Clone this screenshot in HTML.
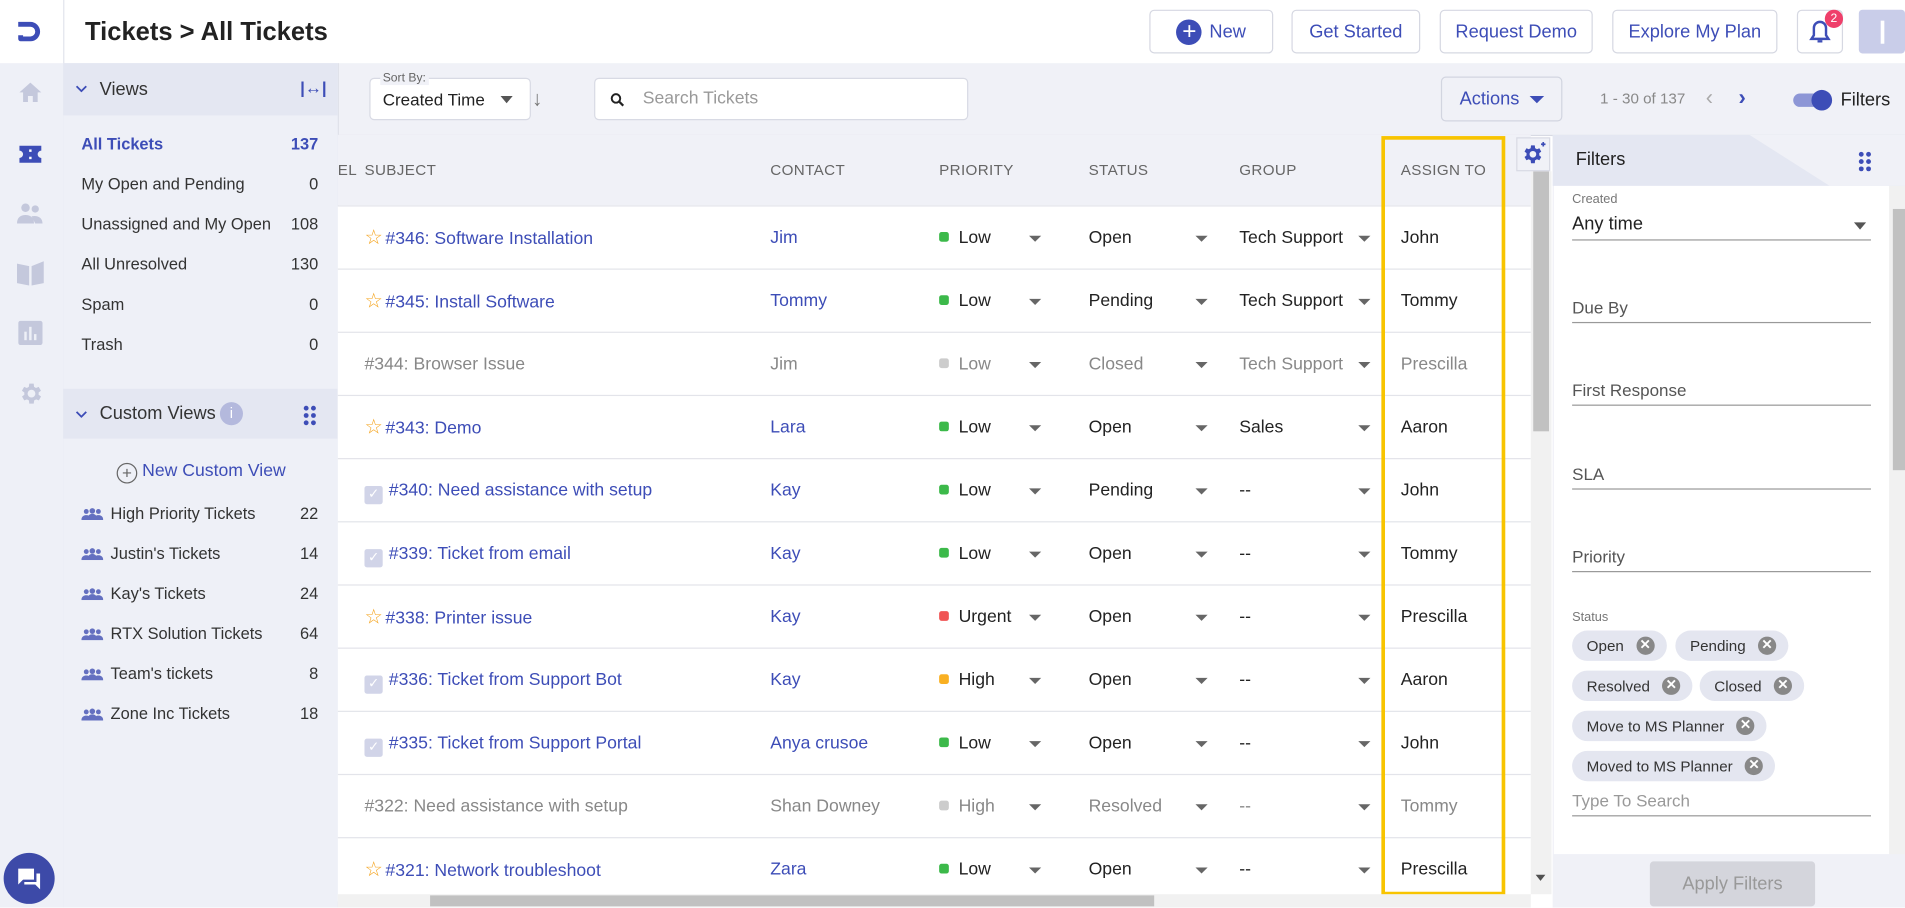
<!DOCTYPE html>
<html><head><meta charset="utf-8">
<style>
html,body{margin:0;padding:0;width:1905px;height:908px;overflow:hidden;background:#fff}
#w{position:absolute;left:0;top:0;width:1568px;height:747px;transform:scale(1.21492);transform-origin:0 0;font-family:"Liberation Sans",sans-serif;font-size:14px;color:#222;overflow:hidden}
.a{position:absolute}
.btn{position:absolute;top:8px;height:36px;border:1px solid #d6d8e2;border-radius:4px;background:#fff;color:#3d4db7;font-size:15px;display:flex;align-items:center;justify-content:center;box-sizing:border-box}
.vi{position:absolute;left:67px;width:195px;display:flex;justify-content:space-between;font-size:13.5px;color:#333}
.cv{position:absolute;left:67px;width:195px;display:flex;justify-content:space-between;font-size:13.5px;color:#333;align-items:center}
.cv span:first-child{display:flex;align-items:center;gap:6px}
.row{position:absolute;left:278px;width:982px;height:52px;border-top:1px solid #e3e4ea;background:#fff}
.row div{position:absolute;top:18px;font-size:14.5px;white-space:nowrap}
.lk{color:#3d4db7}
.gr{color:#888}
.dd{width:0;height:0;border-left:5px solid transparent;border-right:5px solid transparent;border-top:5px solid #666;top:24px!important}
.dot{display:inline-block;width:8px;height:8px;border-radius:2px;margin-right:8px;vertical-align:1px}
.hd{position:absolute;top:133px;font-size:12.5px;color:#666;letter-spacing:.3px}
.fl{position:absolute;left:1294px;width:246px;border-bottom:1px solid #999;font-size:14px;color:#555;padding-bottom:4px}
.chip{position:absolute;height:25px;border-radius:13px;background:#e4e6f0;font-size:12.5px;color:#333;display:flex;align-items:center;padding:0 10px 0 12px;gap:10px;box-sizing:border-box}
.x{width:15px;height:15px;border-radius:50%;background:#888;color:#fff;font-size:11px;line-height:15px;text-align:center;font-weight:bold}
.star{color:#f5a623;font-size:17px;margin-right:2px}
.cb{display:inline-block;width:15px;height:15px;background:#d1d4e8;border-radius:2px;vertical-align:-2px;margin-right:5px;color:#fff;font-size:11px;line-height:15px;text-align:center}
</style></head><body><div id="w">
<div class="a" style="left:0;top:0;width:52px;height:747px;background:#eef0f7;border-right:1px solid #dfe1ea"></div>
<div class="a" style="left:0;top:0;width:52px;height:52px;background:#fff"></div>
<svg class="a" style="left:13px;top:14px" width="24" height="24" viewBox="0 0 24 24"><path d="M2 4h10a8 8 0 0 1 0 16H4a2 2 0 0 1-2-2v-3h4v1h6a4 4 0 0 0 0-8H2z" fill="#3d4db7"/></svg>
<svg class="a" style="left:15px;top:66px" width="20" height="20" viewBox="0 0 20 20"><path d="M10 2 1 10h3v8h4v-5h4v5h4v-8h3z" fill="#c4c8dc"/></svg>
<svg class="a" style="left:15px;top:118px" width="20" height="18" viewBox="0 0 20 18"><path d="M1 2h18v4a3 3 0 0 0 0 6v4H1v-4a3 3 0 0 0 0-6z" fill="#3d4db7"/><rect x="9" y="5" width="2" height="2" fill="#fff"/><rect x="9" y="11" width="2" height="2" fill="#fff"/></svg>
<svg class="a" style="left:14px;top:166px" width="22" height="20" viewBox="0 0 22 20"><circle cx="7" cy="5" r="3.5" fill="#c4c8dc"/><circle cx="15" cy="6" r="3" fill="#c4c8dc"/><path d="M0 18c0-5 3-7 7-7s7 2 7 7z M12 12c5-1 9 1 9 6h-6z" fill="#c4c8dc"/></svg>
<svg class="a" style="left:13px;top:214px" width="24" height="22" viewBox="0 0 24 22"><path d="M1 3l10 2v16L1 19zM13 5l10-4v18l-10 2z" fill="#c4c8dc"/></svg>
<svg class="a" style="left:15px;top:264px" width="20" height="20" viewBox="0 0 20 20"><rect width="20" height="20" rx="2" fill="#c4c8dc"/><rect x="5" y="9" width="2" height="7" fill="#eef0f7"/><rect x="9" y="5" width="2" height="11" fill="#eef0f7"/><rect x="13" y="11" width="2" height="5" fill="#eef0f7"/></svg>
<svg class="a" style="left:14px;top:313px" width="22" height="22" viewBox="0 0 24 24"><path d="M19.4 13a7.5 7.5 0 0 0 0-2l2.1-1.6-2-3.5-2.5 1a7 7 0 0 0-1.7-1L15 3h-4l-.4 2.9a7 7 0 0 0-1.7 1l-2.5-1-2 3.5L6.6 11a7.5 7.5 0 0 0 0 2l-2.1 1.6 2 3.5 2.5-1a7 7 0 0 0 1.7 1L11 21h4l.4-2.9a7 7 0 0 0 1.7-1l2.5 1 2-3.5zM13 15.5a3.5 3.5 0 1 1 0-7 3.5 3.5 0 0 1 0 7z" fill="#c4c8dc"/></svg>
<div class="a" style="left:3px;top:702px;width:42px;height:42px;border-radius:50%;background:#3d4aa8"></div>
<svg class="a" style="left:13px;top:712px" width="22" height="22" viewBox="0 0 22 22"><path d="M2 3h13v9H6l-4 4z" fill="#fff"/><path d="M17 7h3v13l-4-4H7v-2h10z" fill="#fff"/></svg>

<div class="a" style="left:53px;top:0;width:1515px;height:52px;background:#fff"></div>
<div class="a" style="left:70px;top:15px;font-size:21px;font-weight:bold;color:#222">Tickets &gt; All Tickets</div>
<div class="btn" style="left:946px;width:102px"><span style="display:inline-block;width:21px;height:21px;border-radius:50%;background:#3d4db7;color:#fff;text-align:center;line-height:21px;font-size:20px;margin-right:6px">+</span>New</div>
<div class="btn" style="left:1063px;width:106px">Get Started</div>
<div class="btn" style="left:1185px;width:126px">Request Demo</div>
<div class="btn" style="left:1327px;width:136px">Explore My Plan</div>
<div class="btn" style="left:1479px;width:38px"><svg width="18" height="20" viewBox="0 0 18 20"><path d="M9 2a5 5 0 0 1 5 5v6l2 3H2l2-3V7a5 5 0 0 1 5-5z" fill="none" stroke="#3d4db7" stroke-width="2"/><path d="M7 18h4" stroke="#3d4db7" stroke-width="2"/></svg></div>
<div class="a" style="left:1502px;top:8px;width:15px;height:15px;border-radius:50%;background:#ef3f6a;color:#fff;font-size:10px;text-align:center;line-height:15px">2</div>
<div class="a" style="left:1530px;top:8px;width:38px;height:36px;background:#c9cde9;border-radius:3px"><div style="position:absolute;left:18px;top:9px;width:3px;height:19px;background:#fff"></div></div>

<div class="a" style="left:52px;top:52px;width:226px;height:695px;background:#eef0f7;border-right:1px solid #dfe1ea"></div>
<div class="a" style="left:52px;top:52px;width:226px;height:43px;background:#e4e7f2"></div>
<svg class="a" style="left:62px;top:70px" width="10" height="6"><path d="M1 1l4 4 4-4" fill="none" stroke="#3d4db7" stroke-width="1.5"/></svg>
<div class="a" style="left:82px;top:65px;font-size:15px;color:#333">Views</div>
<div class="a" style="left:247px;top:64px;color:#3d4db7;font-size:14px;font-weight:bold">|&#8596;|</div>
<div class="vi" style="top:111px;color:#3d4db7;font-weight:bold"><span>All Tickets</span><span>137</span></div>
<div class="vi" style="top:144px"><span>My Open and Pending</span><span>0</span></div>
<div class="vi" style="top:177px"><span>Unassigned and My Open</span><span>108</span></div>
<div class="vi" style="top:210px"><span>All Unresolved</span><span>130</span></div>
<div class="vi" style="top:243px"><span>Spam</span><span>0</span></div>
<div class="vi" style="top:276px"><span>Trash</span><span>0</span></div>
<div class="a" style="left:52px;top:320px;width:226px;height:41px;background:#e4e7f2"></div>
<svg class="a" style="left:62px;top:338px" width="10" height="6"><path d="M1 1l4 4 4-4" fill="none" stroke="#3d4db7" stroke-width="1.5"/></svg>
<div class="a" style="left:82px;top:332px;font-size:15px;color:#333">Custom Views</div>
<div class="a" style="left:181px;top:331px;width:19px;height:19px;border-radius:50%;background:#b4b9dd;color:#fff;text-align:center;font-size:12px;line-height:19px">i</div>
<svg class="a" style="left:249px;top:333px" width="12" height="18"><g fill="#3d4db7"><circle cx="3" cy="3" r="2"/><circle cx="9" cy="3" r="2"/><circle cx="3" cy="9" r="2"/><circle cx="9" cy="9" r="2"/><circle cx="3" cy="15" r="2"/><circle cx="9" cy="15" r="2"/></g></svg>
<div class="a" style="left:96px;top:380px;color:#3d4db7;font-size:14.5px"><span style="display:inline-block;width:15px;height:15px;border:1.5px solid #666;border-radius:50%;text-align:center;line-height:15px;color:#666;font-size:14px;margin-right:4px;vertical-align:-2px">+</span>New Custom View</div>
<div class="cv" style="top:415px"><span><svg width="18" height="10"><g fill="#6470c0"><circle cx="4" cy="3" r="2"/><circle cx="9" cy="2.5" r="2.3"/><circle cx="14" cy="3" r="2"/><path d="M0 10c0-3 2-4 4-4s4 1 4 4zM5 10c0-4 2-5 4-5s4 1 4 5zM10 10c0-3 2-4 4-4s4 1 4 4z"/></g></svg>High Priority Tickets</span><span>22</span></div>
<div class="cv" style="top:448px"><span><svg width="18" height="10"><g fill="#6470c0"><circle cx="4" cy="3" r="2"/><circle cx="9" cy="2.5" r="2.3"/><circle cx="14" cy="3" r="2"/><path d="M0 10c0-3 2-4 4-4s4 1 4 4zM5 10c0-4 2-5 4-5s4 1 4 5zM10 10c0-3 2-4 4-4s4 1 4 4z"/></g></svg>Justin's Tickets</span><span>14</span></div>
<div class="cv" style="top:481px"><span><svg width="18" height="10"><g fill="#6470c0"><circle cx="4" cy="3" r="2"/><circle cx="9" cy="2.5" r="2.3"/><circle cx="14" cy="3" r="2"/><path d="M0 10c0-3 2-4 4-4s4 1 4 4zM5 10c0-4 2-5 4-5s4 1 4 5zM10 10c0-3 2-4 4-4s4 1 4 4z"/></g></svg>Kay's Tickets</span><span>24</span></div>
<div class="cv" style="top:514px"><span><svg width="18" height="10"><g fill="#6470c0"><circle cx="4" cy="3" r="2"/><circle cx="9" cy="2.5" r="2.3"/><circle cx="14" cy="3" r="2"/><path d="M0 10c0-3 2-4 4-4s4 1 4 4zM5 10c0-4 2-5 4-5s4 1 4 5zM10 10c0-3 2-4 4-4s4 1 4 4z"/></g></svg>RTX Solution Tickets</span><span>64</span></div>
<div class="cv" style="top:547px"><span><svg width="18" height="10"><g fill="#6470c0"><circle cx="4" cy="3" r="2"/><circle cx="9" cy="2.5" r="2.3"/><circle cx="14" cy="3" r="2"/><path d="M0 10c0-3 2-4 4-4s4 1 4 4zM5 10c0-4 2-5 4-5s4 1 4 5zM10 10c0-3 2-4 4-4s4 1 4 4z"/></g></svg>Team's tickets</span><span>8</span></div>
<div class="cv" style="top:580px"><span><svg width="18" height="10"><g fill="#6470c0"><circle cx="4" cy="3" r="2"/><circle cx="9" cy="2.5" r="2.3"/><circle cx="14" cy="3" r="2"/><path d="M0 10c0-3 2-4 4-4s4 1 4 4zM5 10c0-4 2-5 4-5s4 1 4 5zM10 10c0-3 2-4 4-4s4 1 4 4z"/></g></svg>Zone Inc Tickets</span><span>18</span></div>

<div class="a" style="left:279px;top:52px;width:1289px;height:59px;background:#f0f1f7;border-bottom:1px solid #d8dae4"></div>
<div class="a" style="left:304px;top:64px;width:133px;height:35px;background:#fff;border:1px solid #d8dae4;border-radius:4px;box-sizing:border-box"></div>
<div class="a" style="left:313px;top:59px;font-size:10px;color:#666;background:#f0f1f7;padding:0 2px">Sort By:</div>
<div class="a" style="left:315px;top:74px;font-size:14px;color:#222">Created Time</div>
<div class="a" style="left:412px;top:79px;width:0;height:0;border-left:5px solid transparent;border-right:5px solid transparent;border-top:6px solid #555"></div>
<div class="a" style="left:438px;top:72px;font-size:17px;color:#777">&#8595;</div>
<div class="a" style="left:489px;top:64px;width:308px;height:35px;background:#fff;border:1px solid #d8dae4;border-radius:4px;box-sizing:border-box"></div>
<svg class="a" style="left:502px;top:76px" width="12" height="12"><circle cx="5" cy="5" r="3.5" fill="none" stroke="#222" stroke-width="1.6"/><path d="M7.5 7.5 11 11" stroke="#222" stroke-width="1.8"/></svg>
<div class="a" style="left:529px;top:73px;font-size:14.5px;color:#999">Search Tickets</div>
<div class="a" style="left:1186px;top:63px;width:100px;height:37px;border:1px solid #d2d5e0;border-radius:4px;box-sizing:border-box;color:#3d4db7;font-size:15px;display:flex;align-items:center;justify-content:center">Actions<span style="display:inline-block;margin-left:8px;border-left:6px solid transparent;border-right:6px solid transparent;border-top:6px solid #3d4db7"></span></div>
<div class="a" style="left:1317px;top:74px;font-size:12.5px;color:#888">1 - 30 of 137</div>
<div class="a" style="left:1404px;top:70px;font-size:18px;color:#aaa">&#8249;</div>
<div class="a" style="left:1431px;top:70px;font-size:18px;color:#3d4db7;font-weight:bold">&#8250;</div>
<div class="a" style="left:1476px;top:77px;width:28px;height:11px;border-radius:6px;background:#8d96d6"></div>
<div class="a" style="left:1491px;top:74px;width:17px;height:17px;border-radius:50%;background:#3d4db7"></div>
<div class="a" style="left:1515px;top:74px;font-size:15px;color:#222">Filters</div>

<div class="a" style="left:278px;top:111px;width:982px;height:58px;background:#f0f1f7"></div>
<div class="hd" style="left:278px">EL</div>
<div class="hd" style="left:300px">SUBJECT</div>
<div class="hd" style="left:634px">CONTACT</div>
<div class="hd" style="left:773px">PRIORITY</div>
<div class="hd" style="left:896px">STATUS</div>
<div class="hd" style="left:1020px">GROUP</div>
<div class="hd" style="left:1153px">ASSIGN TO</div>

<div class="row" style="top:169px"><div class="lk" style="left:22px;top:16px"><span class="star">☆</span>#346: Software Installation</div><div class="lk" style="left:356px">Jim</div><div style="left:495px"><span class="dot" style="background:#3cb94a"></span>Low</div><div class="dd" style="left:569px"></div><div style="left:618px">Open</div><div class="dd" style="left:706px"></div><div style="left:742px">Tech Support</div><div class="dd" style="left:840px"></div><div style="left:875px">John</div></div>
<div class="row" style="top:221px"><div class="lk" style="left:22px;top:16px"><span class="star">☆</span>#345: Install Software</div><div class="lk" style="left:356px">Tommy</div><div style="left:495px"><span class="dot" style="background:#3cb94a"></span>Low</div><div class="dd" style="left:569px"></div><div style="left:618px">Pending</div><div class="dd" style="left:706px"></div><div style="left:742px">Tech Support</div><div class="dd" style="left:840px"></div><div style="left:875px">Tommy</div></div>
<div class="row" style="top:273px"><div class="gr" style="left:22px">#344: Browser Issue</div><div class="gr" style="left:356px">Jim</div><div class="gr" style="left:495px"><span class="dot" style="background:#ccc"></span>Low</div><div class="dd" style="left:569px"></div><div class="gr" style="left:618px">Closed</div><div class="dd" style="left:706px"></div><div class="gr" style="left:742px">Tech Support</div><div class="dd" style="left:840px"></div><div class="gr" style="left:875px">Prescilla</div></div>
<div class="row" style="top:325px"><div class="lk" style="left:22px;top:16px"><span class="star">☆</span>#343: Demo</div><div class="lk" style="left:356px">Lara</div><div style="left:495px"><span class="dot" style="background:#3cb94a"></span>Low</div><div class="dd" style="left:569px"></div><div style="left:618px">Open</div><div class="dd" style="left:706px"></div><div style="left:742px">Sales</div><div class="dd" style="left:840px"></div><div style="left:875px">Aaron</div></div>
<div class="row" style="top:377px"><div class="lk" style="left:22px"><span class="cb">✓</span>#340: Need assistance with setup</div><div class="lk" style="left:356px">Kay</div><div style="left:495px"><span class="dot" style="background:#3cb94a"></span>Low</div><div class="dd" style="left:569px"></div><div style="left:618px">Pending</div><div class="dd" style="left:706px"></div><div style="left:742px">--</div><div class="dd" style="left:840px"></div><div style="left:875px">John</div></div>
<div class="row" style="top:429px"><div class="lk" style="left:22px"><span class="cb">✓</span>#339: Ticket from email</div><div class="lk" style="left:356px">Kay</div><div style="left:495px"><span class="dot" style="background:#3cb94a"></span>Low</div><div class="dd" style="left:569px"></div><div style="left:618px">Open</div><div class="dd" style="left:706px"></div><div style="left:742px">--</div><div class="dd" style="left:840px"></div><div style="left:875px">Tommy</div></div>
<div class="row" style="top:481px"><div class="lk" style="left:22px;top:16px"><span class="star">☆</span>#338: Printer issue</div><div class="lk" style="left:356px">Kay</div><div style="left:495px"><span class="dot" style="background:#f05454"></span>Urgent</div><div class="dd" style="left:569px"></div><div style="left:618px">Open</div><div class="dd" style="left:706px"></div><div style="left:742px">--</div><div class="dd" style="left:840px"></div><div style="left:875px">Prescilla</div></div>
<div class="row" style="top:533px"><div class="lk" style="left:22px"><span class="cb">✓</span>#336: Ticket from Support Bot</div><div class="lk" style="left:356px">Kay</div><div style="left:495px"><span class="dot" style="background:#f9b022"></span>High</div><div class="dd" style="left:569px"></div><div style="left:618px">Open</div><div class="dd" style="left:706px"></div><div style="left:742px">--</div><div class="dd" style="left:840px"></div><div style="left:875px">Aaron</div></div>
<div class="row" style="top:585px"><div class="lk" style="left:22px"><span class="cb">✓</span>#335: Ticket from Support Portal</div><div class="lk" style="left:356px">Anya crusoe</div><div style="left:495px"><span class="dot" style="background:#3cb94a"></span>Low</div><div class="dd" style="left:569px"></div><div style="left:618px">Open</div><div class="dd" style="left:706px"></div><div style="left:742px">--</div><div class="dd" style="left:840px"></div><div style="left:875px">John</div></div>
<div class="row" style="top:637px"><div class="gr" style="left:22px">#322: Need assistance with setup</div><div class="gr" style="left:356px">Shan Downey</div><div class="gr" style="left:495px"><span class="dot" style="background:#ccc"></span>High</div><div class="dd" style="left:569px"></div><div class="gr" style="left:618px">Resolved</div><div class="dd" style="left:706px"></div><div class="gr" style="left:742px">--</div><div class="dd" style="left:840px"></div><div class="gr" style="left:875px">Tommy</div></div>
<div class="row" style="top:689px"><div class="lk" style="left:22px;top:16px"><span class="star">☆</span>#321: Network troubleshoot</div><div class="lk" style="left:356px">Zara</div><div style="left:495px"><span class="dot" style="background:#3cb94a"></span>Low</div><div class="dd" style="left:569px"></div><div style="left:618px">Open</div><div class="dd" style="left:706px"></div><div style="left:742px">--</div><div class="dd" style="left:840px"></div><div style="left:875px">Prescilla</div></div>

<div class="a" style="left:1137px;top:112px;width:102px;height:625px;border:3px solid #f8c400;box-sizing:border-box"></div>

<div class="a" style="left:1260px;top:141px;width:17px;height:595px;background:#f1f1f1"></div>
<div class="a" style="left:1262px;top:141px;width:13px;height:214px;background:#c1c1c1"></div>
<div class="a" style="left:1264px;top:720px;border-left:4px solid transparent;border-right:4px solid transparent;border-top:5px solid #505050"></div>
<div class="a" style="left:1248px;top:113px;width:28px;height:28px;background:#f0f1f7;border:1px solid #d8dae4;box-sizing:border-box"></div>
<svg class="a" style="left:1251px;top:116px" width="22" height="22" viewBox="0 0 24 24"><path d="M17.4 13a6.5 6.5 0 0 0 0-2l1.8-1.4-1.7-3-2.2.9a6 6 0 0 0-1.6-.9L13.4 4h-3.4l-.3 2.6a6 6 0 0 0-1.6.9l-2.2-.9-1.7 3L6 11a6.5 6.5 0 0 0 0 2l-1.8 1.4 1.7 3 2.2-.9a6 6 0 0 0 1.6.9l.3 2.6h3.4l.3-2.6a6 6 0 0 0 1.6-.9l2.2.9 1.7-3zM11.7 15a3 3 0 1 1 0-6 3 3 0 0 1 0 6z" fill="#3d4db7"/><path d="M21 1v4M19 3h4" stroke="#3d4db7" stroke-width="1.5"/></svg>
<div class="a" style="left:278px;top:736px;width:982px;height:11px;background:#f1f1f1"></div>
<div class="a" style="left:354px;top:737px;width:596px;height:9px;background:#c1c1c1"></div>

<div class="a" style="left:1278px;top:111px;width:290px;height:636px;background:#f0f1f7"></div>
<div class="a" style="left:1278px;top:111px;width:290px;height:42px;background:#e4e7f2"></div>
<svg class="a" style="left:1440px;top:111px" width="128" height="42"><path d="M0 0h128v42h-62z" fill="#f0f1f7"/></svg>
<div class="a" style="left:1297px;top:123px;font-size:15px;color:#222">Filters</div>
<svg class="a" style="left:1529px;top:124px" width="12" height="18"><g fill="#3d4db7"><circle cx="3" cy="3" r="2"/><circle cx="9" cy="3" r="2"/><circle cx="3" cy="9" r="2"/><circle cx="9" cy="9" r="2"/><circle cx="3" cy="15" r="2"/><circle cx="9" cy="15" r="2"/></g></svg>
<div class="a" style="left:1279px;top:153px;width:276px;height:550px;background:#fff"></div>
<div class="a" style="left:1294px;top:158px;font-size:10.5px;color:#777">Created</div>
<div class="fl" style="top:176px;color:#222;font-size:15px">Any time</div>
<div class="a" style="left:1526px;top:183px;border-left:5px solid transparent;border-right:5px solid transparent;border-top:6px solid #555"></div>
<div class="fl" style="top:245px">Due By</div>
<div class="fl" style="top:313px">First Response</div>
<div class="fl" style="top:382px">SLA</div>
<div class="fl" style="top:450px">Priority</div>
<div class="a" style="left:1294px;top:502px;font-size:10.5px;color:#777">Status</div>
<div class="chip" style="left:1294px;top:519px">Open<span class="x">✕</span></div>
<div class="chip" style="left:1379px;top:519px">Pending<span class="x">✕</span></div>
<div class="chip" style="left:1294px;top:552px">Resolved<span class="x">✕</span></div>
<div class="chip" style="left:1399px;top:552px">Closed<span class="x">✕</span></div>
<div class="chip" style="left:1294px;top:585px">Move to MS Planner<span class="x">✕</span></div>
<div class="chip" style="left:1294px;top:618px">Moved to MS Planner<span class="x">✕</span></div>
<div class="fl" style="top:651px;color:#999">Type To Search</div>
<div class="a" style="left:1555px;top:153px;width:13px;height:550px;background:#f1f1f1"></div>
<div class="a" style="left:1558px;top:172px;width:10px;height:215px;background:#c1c1c1"></div>
<div class="a" style="left:1358px;top:709px;width:136px;height:37px;background:#d4d5dc;border-radius:3px;color:#999;font-size:15px;display:flex;align-items:center;justify-content:center">Apply Filters</div>
</div></body></html>
